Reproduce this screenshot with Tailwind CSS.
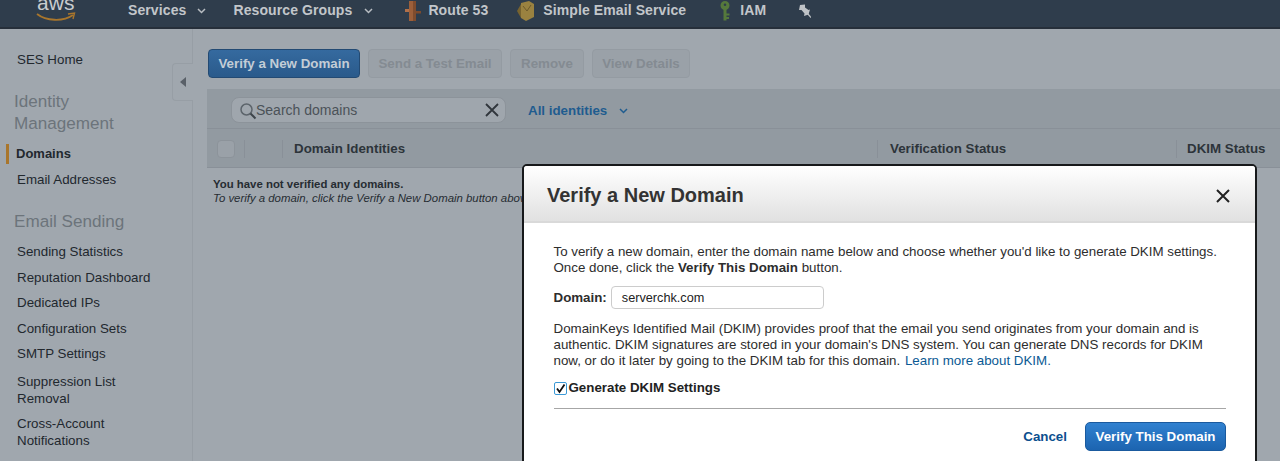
<!DOCTYPE html>
<html lang="en">
  <head>
    <meta charset="UTF-8" />
    <title>Verify a New Domain</title>
    <script src="https://cdn.jsdelivr.net/npm/@tailwindcss/browser@4"></script>
  </head>
  <body class="relative h-[461px] w-[1280px] overflow-hidden bg-[#a0a7ae] font-['Liberation_Sans',Arial,sans-serif] text-[13.33px] text-[#22282e]">
    <!-- top nav -->
    <header class="flex h-[29px] items-center overflow-hidden border-b-2 border-[#262f3a] bg-[#2f3d4c] pb-[6px] text-[14px] font-bold tracking-[0.1px] text-[#c2c6ca]">
      <div class="relative ml-[36px] h-[24px] w-[92px] shrink-0">
        <span class="absolute left-[1px] top-[-8px] text-[21px] leading-[24px] font-normal text-[#c8ccd0]">aws</span>
        <svg class="absolute left-0 top-[12px]" width="40" height="12" viewBox="0 0 40 12" fill="none">
          <path d="M1 3C10 10 27 11 37 4" stroke="#a9762c" stroke-width="1.800" />
          <path d="M32 3L38.500 2L37 8" stroke="#a9762c" stroke-width="1.400" />
        </svg>
      </div>
      <span>Services</span>
      <svg class="ml-[11px]" width="9" height="6" viewBox="0 0 9 6" fill="none"><path d="M1 1l3.500 3.500L8 1" stroke="#b8bdc2" stroke-width="1.500" /></svg>
      <span class="ml-[27px]">Resource Groups</span>
      <svg class="ml-[12px]" width="9" height="6" viewBox="0 0 9 6" fill="none"><path d="M1 1l3.500 3.500L8 1" stroke="#b8bdc2" stroke-width="1.500" /></svg>
      <svg class="ml-[31px]" width="18" height="22" viewBox="0 0 18 22">
        <rect x="5" y="1" width="7" height="20" fill="#9c5f3a" />
        <rect x="9" y="1" width="3" height="20" fill="#7f4c2e" />
        <rect x="1" y="9" width="4" height="3" fill="#b0704a" />
        <rect x="12" y="11" width="5" height="2.500" fill="#7d4a2c" />
      </svg>
      <span class="ml-[6px]">Route 53</span>
      <svg class="ml-[28px]" width="19" height="20" viewBox="0 0 19 20">
        <path d="M1 10L5 3V17Z" fill="#77632f" />
        <path d="M5 2L13 0L18 3V16L10 20L5 17Z" fill="#9a8240" />
        <path d="M7 5L11 10L15 4" fill="none" stroke="#6d5a2a" stroke-width="1" />
      </svg>
      <span class="ml-[8px]">Simple Email Service</span>
      <svg class="ml-[33px]" width="12" height="22" viewBox="0 0 12 22">
        <path fill-rule="evenodd" d="M6 1a4.500 4.500 0 1 1 0 9a4.500 4.500 0 1 1 0-9zM6 3.500a1.300 1.300 0 1 0 0 2.600a1.300 1.300 0 1 0 0-2.600z" fill="#55793c" />
        <path d="M4.500 9h3v11.500h-3zM7.500 13.500H10.500v2H7.500zM7.500 17H10v2H7.500z" fill="#55793c" />
      </svg>
      <span class="ml-[9px]">IAM</span>
      <svg class="ml-[32px]" width="13" height="14" viewBox="0 0 13 14">
        <path d="M2 1L7 0.500L7 3.500L10.500 6L12 5.500L10.500 10.500L6 12L6.500 9.500L3.500 6L1 6Z" fill="#bfc3c7" />
        <path d="M9.500 9.500L13 13.500" stroke="#bfc3c7" stroke-width="1.200" />
      </svg>
    </header>

    <div class="flex h-[432px]">
      <!-- sidebar -->
      <aside class="relative h-full w-[193px] shrink-0 border-r border-[#979ea5]">
        <div class="pl-[17px] pt-[21.500px] leading-[18px]">SES Home</div>
        <h2 class="mt-[22.500px] pl-[14px] text-[17.1px] leading-[22px] text-[#6c747b]">Identity<br />Management</h2>
        <div class="mt-[9px] ml-[6px] border-l-[3px] border-[#a9762c] pl-[7px] text-[13px] font-bold leading-[20px]">Domains</div>
        <div class="mt-[7px] pl-[17px] leading-[18px]">Email Addresses</div>
        <h2 class="mt-[22px] pl-[14px] text-[17.1px] leading-[22px] text-[#6c747b]">Email Sending</h2>
        <ul class="mt-[10px] pl-[17px] leading-[18px]">
          <li>Sending Statistics</li>
          <li class="mt-[7.500px]">Reputation Dashboard</li>
          <li class="mt-[7.500px]">Dedicated IPs</li>
          <li class="mt-[7.500px]">Configuration Sets</li>
          <li class="mt-[7.500px]">SMTP Settings</li>
          <li class="mt-[9.500px] leading-[17px]">Suppression List<br />Removal</li>
          <li class="mt-[8px] leading-[17px]">Cross-Account<br />Notifications</li>
        </ul>
        <button class="absolute left-[172px] top-[34px] flex h-[38px] w-[21px] items-center justify-center rounded-l-[4px] border border-r-0 border-[#979ea5] bg-[#a0a7ae]">
          <svg width="6" height="10" viewBox="0 0 6 10"><path d="M6 0V10L0 5Z" fill="#596068" /></svg>
        </button>
      </aside>

      <!-- main -->
      <main class="min-w-0 flex-1">
        <div class="flex h-[60px] items-start gap-[8px] pl-[15px] pt-[20px] font-bold">
          <button class="h-[29px] w-[152px] rounded-[4px] border border-[#234a73] bg-gradient-to-b from-[#356a9f] to-[#2a5a8b] text-[#c3cdd6]">Verify a New Domain</button>
          <button class="h-[29px] w-[134px] rounded-[4px] border border-[#949ba2] bg-[#9aa1a8] text-[#848b92]">Send a Test Email</button>
          <button class="h-[29px] w-[74px] rounded-[4px] border border-[#949ba2] bg-[#9aa1a8] text-[#848b92]">Remove</button>
          <button class="h-[29px] w-[98px] rounded-[4px] border border-[#949ba2] bg-[#9aa1a8] text-[#848b92]">View Details</button>
        </div>
        <div class="ml-[14px] bg-[#929aa1]">
          <div class="flex h-[40px] items-center border-b border-[#899098] pl-[24px] pt-[2px]">
            <div class="flex h-[26px] w-[275px] items-center rounded-[8px] border border-[#8c939a] bg-[#9fa6ad] pl-[7px] pr-[6px] text-[14px] text-[#4b5258]">
              <svg width="18" height="18" viewBox="0 0 18 18" fill="none" class="mt-[2px] shrink-0">
                <circle cx="7.500" cy="7.500" r="5.500" stroke="#5c646b" stroke-width="1.500" />
                <path d="M11.500 11.500L16.500 16.500" stroke="#3d444a" stroke-width="2" />
              </svg>
              <span class="-ml-[1px] flex-1 translate-y-[1px]">Search domains</span>
              <svg width="14" height="14" viewBox="0 0 14 14" fill="none" class="mt-[1px]"><path d="M1 1l12 12M13 1L1 13" stroke="#30363c" stroke-width="1.800" /></svg>
            </div>
            <span class="ml-[22px] translate-y-[1px] font-bold text-[#1f5c8f]">All identities</span>
            <svg class="ml-[12px] translate-y-[1px]" width="9" height="6" viewBox="0 0 9 6" fill="none"><path d="M1 1l3.500 3.500L8 1" stroke="#1f5c8f" stroke-width="1.500" /></svg>
          </div>
          <div class="flex h-[39px] items-center border-b border-[#899098] pt-[1px] font-bold text-[#2d343a]">
            <div class="ml-[10px] h-[18px] w-[18px] rounded-[4px] border border-[#8c939a] bg-[#9aa1a8]"></div>
            <div class="ml-[9px] h-[18px] border-l border-[#899098]"></div>
            <div class="ml-[37px] h-[18px] border-l border-[#899098]"></div>
            <span class="ml-[11px] w-[583px]">Domain Identities</span>
            <div class="h-[18px] border-l border-[#899098]"></div>
            <span class="ml-[12px] w-[286px]">Verification Status</span>
            <div class="h-[18px] border-l border-[#899098]"></div>
            <span class="ml-[10px] whitespace-nowrap">DKIM Status</span>
          </div>
        </div>
        <div class="pl-[20px] pt-[9px] text-[11.4px] leading-[14px] text-[#262c32]">
          <p class="font-bold">You have not verified any domains.</p>
          <p class="italic">To verify a domain, click the Verify a New Domain button above to get started.</p>
        </div>
      </main>
    </div>

    <!-- dialog -->
    <section class="absolute left-[522px] top-[164px] h-[310px] w-[735px] rounded-t-[5px] border-2 border-[#17191b] bg-white text-[#2d2d2d]">
      <div class="flex h-[57px] items-center justify-between rounded-t-[3px] border-b-2 border-[#d9d9d9] bg-gradient-to-b from-white to-[#e1e1e1] pl-[23px] pr-[25px]">
        <h1 class="translate-y-[1px] text-[20px] font-bold text-[#333]">Verify a New Domain</h1>
        <svg class="translate-y-[2px]" width="14" height="14" viewBox="0 0 14 14" fill="none"><path d="M1 1l12 12M13 1L1 13" stroke="#222" stroke-width="2" /></svg>
      </div>
      <div class="pl-[29.500px] pr-[29px] pt-[21px] leading-[16px]">
        <p>To verify a new domain, enter the domain name below and choose whether you'd like to generate DKIM settings.<br />Once done, click the <b>Verify This Domain</b> button.</p>
        <div class="mt-[10px] flex items-center">
          <label class="font-bold">Domain:</label>
          <div class="ml-[4px] flex h-[23px] w-[213px] items-center rounded-[4px] border border-[#ccc] pl-[10px] text-[12.700px] text-[#222]">serverchk.com</div>
        </div>
        <p class="mt-[12px]">DomainKeys Identified Mail (DKIM) provides proof that the email you send originates from your domain and is<br />authentic. DKIM signatures are stored in your domain's DNS system. You can generate DNS records for DKIM<br />now, or do it later by going to the DKIM tab for this domain. <a class="ml-[1px] text-[#0b5a94]">Learn more about DKIM.</a></p>
        <label class="mt-[11px] flex h-[16px] items-center font-bold text-[#222]">
          <span class="flex h-[13px] w-[13px] items-center justify-center rounded-[2px] border border-[#3b99d6]">
            <svg width="11" height="11" viewBox="0 0 11 11" fill="none"><path d="M2 5.500L4.500 9L9.500 1.500" stroke="#111" stroke-width="1.800" /></svg>
          </span>
          <span class="ml-[2px]">Generate DKIM Settings</span>
        </label>
        <div class="mt-[12px] h-px bg-[#a6a6a6]"></div>
        <div class="mt-[13px] flex items-center justify-end">
          <a class="font-bold text-[#0b4f8f]">Cancel</a>
          <button class="ml-[18px] h-[29px] w-[141px] rounded-[5px] border border-[#1a5a9e] bg-gradient-to-b from-[#3081d0] to-[#1c64b0] font-bold text-white">Verify This Domain</button>
        </div>
      </div>
    </section>
  </body>
</html>
